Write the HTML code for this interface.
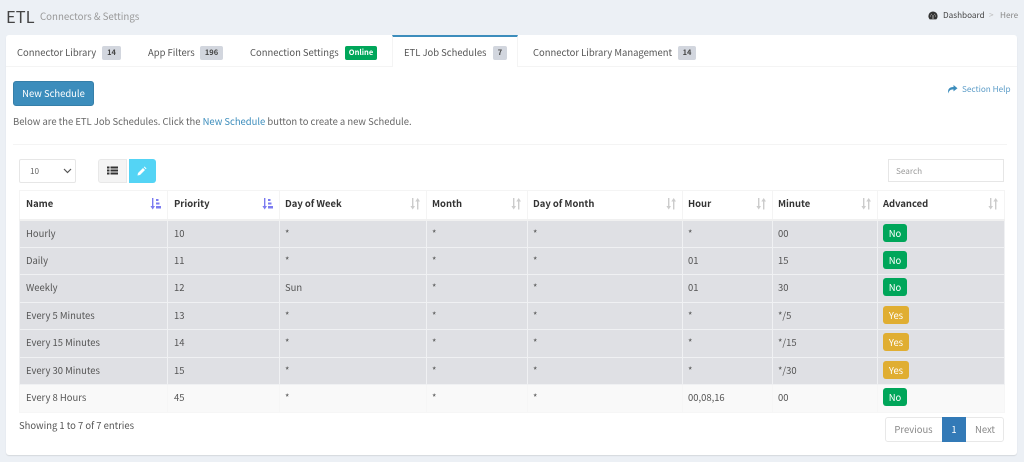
<!DOCTYPE html>
<html><head><meta charset="utf-8"><style>
*{box-sizing:border-box}
html,body{margin:0;padding:0}
body{width:1024px;height:462px;overflow:hidden;background:#ecf0f5;position:relative;font-family:"Noto Sans CJK JP","Liberation Sans",sans-serif;font-size:9.45px;color:#555}
.a{position:absolute;white-space:nowrap;line-height:14px}
.box{position:absolute;left:6px;top:35px;width:1011px;height:420px;background:#fff;border-radius:3px;box-shadow:0 1px 1px rgba(0,0,0,.1)}
.tabline{position:absolute;left:6px;top:66px;width:1011px;height:1px;background:#f4f4f4}
.active{position:absolute;left:392px;top:35px;width:126px;height:32px;background:#fff;border-top:2px solid #3c8dbc;border-right:1px solid #f4f4f4;border-left:1px solid #f4f4f4}
.bdg{position:absolute;height:14px;line-height:14px;background:#d2d6de;color:#444;font-size:7.5px;font-weight:700;text-align:center;border-radius:2px}
table{position:absolute;left:19px;top:190px;width:985px;border-collapse:collapse;table-layout:fixed}
th{height:29px;padding:0 0 3px 6px;text-align:left;font-size:9.45px;font-weight:700;color:#333;border:1px solid #f4f4f4;border-bottom:2px solid #f0f0f0;position:relative;line-height:14px}
td{height:27.5px;padding:0 0 2px 6px;font-size:9.45px;color:#555;border:1px solid #f0f1f3;line-height:14px;background:#dfe0e4}
th:nth-child(n+3),td:nth-child(n+3){padding-left:5px}
tr.l td{background:#f9f9f9;border-color:#f6f6f6}
th svg{position:absolute;right:6px;top:7px}
.lab{display:inline-block;width:24px;height:18px;line-height:18px;border-radius:3px;color:#fff;text-align:center;font-size:9.45px;vertical-align:middle;background:#00a65a}
.y{background:#e0ae32;width:26px}
</style></head><body>
<div class="a" style="left:6px;top:6px;font-size:16.5px;line-height:20px;color:#444">ETL</div>
<div class="a" style="left:40px;top:9px;font-size:9.7px;color:#999">Connectors &amp; Settings</div>
<svg class="a" style="left:928px;top:11px" width="10" height="9" viewBox="0 0 10 9"><path d="M5 .5A4.6 4.6 0 0 0 .4 5c0 1.300.5 2.500 1.300 3.400h6.600A4.600 4.600 0 0 0 9.600 5 4.600 4.600 0 0 0 5 .5z" fill="#333"/><path d="M5 8V4M2 5h1M7 5h1M3 3l.6.6M7 3l-.6.6" stroke="#ccc" stroke-width=".8"/></svg>
<div class="a" style="left:943px;top:8px;font-size:8.2px;color:#444">Dashboard</div>
<div class="a" style="left:989px;top:8px;font-size:8.2px;color:#bbb">&gt;</div>
<div class="a" style="left:1000px;top:8px;font-size:8.2px;color:#888">Here</div>

<div class="box"></div><div class="tabline"></div><div class="active"></div>
<div class="a" style="left:17px;top:45px">Connector Library</div><div class="bdg" style="left:102px;top:46px;width:19px">14</div>
<div class="a" style="left:148px;top:45px">App Filters</div><div class="bdg" style="left:200px;top:46px;width:23px">196</div>
<div class="a" style="left:250px;top:45px">Connection Settings</div><div class="bdg" style="left:345px;top:46px;width:32px;background:#00a65a;color:#fff">Online</div>
<div class="a" style="left:404px;top:45px">ETL Job Schedules</div><div class="bdg" style="left:493px;top:46px;width:14px">7</div>
<div class="a" style="left:533px;top:45px">Connector Library Management</div><div class="bdg" style="left:678px;top:46px;width:18px">14</div>

<div class="a" style="left:13px;top:81px;width:81px;height:25px;line-height:23px;background:#3c8dbc;border:1px solid #367fa9;border-radius:3px;color:#fff;text-align:center">New Schedule</div>
<svg class="a" style="left:947px;top:85px" width="11" height="9" viewBox="0 0 11 9"><path d="M6.500 0l4 3.200-4 3.200V4.500C3.500 4.500 2 5.300 1.500 8.500.3 5 1.800 2 6.500 2z" fill="#3c8dbc"/></svg>
<div class="a" style="left:962px;top:82px;font-size:8.2px;color:#5a9bc7">Section Help</div>
<div class="a" style="left:13px;top:114px;color:#666">Below are the ETL Job Schedules. Click the <span style="color:#3c8dbc">New Schedule</span> button to create a new Schedule.</div>
<div class="a" style="left:13px;top:144px;width:994px;height:1px;background:#f4f4f4"></div>

<div class="a" style="left:19px;top:159px;width:57px;height:24px;border:1px solid #e6e6e6;border-radius:2px"></div>
<div class="a" style="left:30px;top:164px;font-size:8.2px;color:#666">10</div>
<svg class="a" style="left:63px;top:168px" width="9" height="6" viewBox="0 0 9 6"><path d="M1 1l3.500 3.500L8 1" fill="none" stroke="#555" stroke-width="1.200"/></svg>
<div class="a" style="left:98px;top:159px;width:29px;height:24px;background:#f4f4f4;border:1px solid #e8e8e8;border-radius:3px 0 0 3px"></div>
<svg class="a" style="left:107px;top:166px" width="11" height="9" viewBox="0 0 11 9"><path d="M0 .5h2.500v2H0zM0 3.500h2.500v2H0zM0 6.500h2.500v2H0zM3.500 .5H11v2H3.500zM3.500 3.500H11v2H3.500zM3.500 6.500H11v2H3.500z" fill="#333"/></svg>
<div class="a" style="left:129px;top:159px;width:27px;height:24px;background:#54d4f5;border-radius:0 3px 3px 0"></div>
<svg class="a" style="left:137px;top:166px" width="10" height="10" viewBox="0 0 10 10"><path d="M1 7l5-5 2 2-5 5-2.500.5zM6.800 1.200l.7-.7 2 2-.7.7z" fill="#fff"/></svg>
<div class="a" style="left:888px;top:159px;width:116px;height:23px;border:1px solid #e6e6e6"></div>
<div class="a" style="left:896px;top:164px;font-size:8.2px;color:#999">Search</div>

<table><colgroup><col style="width:148px"><col style="width:112px"><col style="width:147px"><col style="width:101px"><col style="width:155px"><col style="width:90px"><col style="width:105px"><col style="width:127px"></colgroup>
<tr>
<th>Name<svg width="11" height="12" viewBox="0 0 11 12"><path d="M2 0h1.400v8H5L2.700 11.500.4 8H2zM6 1h2.500v2H6zM6 4.500h3.500v2H6zM6 8h5v2.500H6z" fill="#7b7bf0"/></svg></th>
<th>Priority<svg width="11" height="12" viewBox="0 0 11 12"><path d="M2 0h1.400v8H5L2.700 11.500.4 8H2zM6 1h2.500v2H6zM6 4.500h3.500v2H6zM6 8h5v2.500H6z" fill="#7b7bf0"/></svg></th>
<th>Day of Week<svg width="10" height="12" viewBox="0 0 10 12"><path d="M2 0h1.400v8H5L2.700 11.500.4 8H2zM7 11.500V3.500H5.300L7.700 0 10 3.500H8.400v8z" fill="#ccc"/></svg></th>
<th>Month<svg width="10" height="12" viewBox="0 0 10 12"><path d="M2 0h1.400v8H5L2.700 11.500.4 8H2zM7 11.500V3.500H5.300L7.700 0 10 3.500H8.400v8z" fill="#ccc"/></svg></th>
<th>Day of Month<svg width="10" height="12" viewBox="0 0 10 12"><path d="M2 0h1.400v8H5L2.700 11.500.4 8H2zM7 11.500V3.500H5.300L7.700 0 10 3.500H8.400v8z" fill="#ccc"/></svg></th>
<th>Hour<svg width="10" height="12" viewBox="0 0 10 12"><path d="M2 0h1.400v8H5L2.700 11.500.4 8H2zM7 11.500V3.500H5.300L7.700 0 10 3.500H8.400v8z" fill="#ccc"/></svg></th>
<th>Minute<svg width="10" height="12" viewBox="0 0 10 12"><path d="M2 0h1.400v8H5L2.700 11.500.4 8H2zM7 11.500V3.500H5.300L7.700 0 10 3.500H8.400v8z" fill="#ccc"/></svg></th>
<th>Advanced<svg width="10" height="12" viewBox="0 0 10 12"><path d="M2 0h1.400v8H5L2.700 11.500.4 8H2zM7 11.500V3.500H5.300L7.700 0 10 3.500H8.400v8z" fill="#ccc"/></svg></th>
</tr>
<tr><td>Hourly</td><td>10</td><td>*</td><td>*</td><td>*</td><td>*</td><td>00</td><td><span class="lab">No</span></td></tr>
<tr><td>Daily</td><td>11</td><td>*</td><td>*</td><td>*</td><td>01</td><td>15</td><td><span class="lab">No</span></td></tr>
<tr><td>Weekly</td><td>12</td><td>Sun</td><td>*</td><td>*</td><td>01</td><td>30</td><td><span class="lab">No</span></td></tr>
<tr><td>Every 5 Minutes</td><td>13</td><td>*</td><td>*</td><td>*</td><td>*</td><td>*/5</td><td><span class="lab y">Yes</span></td></tr>
<tr><td>Every 15 Minutes</td><td>14</td><td>*</td><td>*</td><td>*</td><td>*</td><td>*/15</td><td><span class="lab y">Yes</span></td></tr>
<tr><td>Every 30 Minutes</td><td>15</td><td>*</td><td>*</td><td>*</td><td>*</td><td>*/30</td><td><span class="lab y">Yes</span></td></tr>
<tr class="l"><td>Every 8 Hours</td><td>45</td><td>*</td><td>*</td><td>*</td><td>00,08,16</td><td>00</td><td><span class="lab">No</span></td></tr>
</table>

<div class="a" style="left:19px;top:418px">Showing 1 to 7 of 7 entries</div>
<div class="a" style="left:885px;top:417px;width:119px;height:25px;border:1px solid #e8e8e8;border-radius:3px"></div>
<div class="a" style="left:885px;top:417px;width:57px;height:25px;line-height:25px;text-align:center;color:#888">Previous</div>
<div class="a" style="left:942px;top:417px;width:24px;height:25px;line-height:25px;text-align:center;color:#fff;background:#337ab7">1</div>
<div class="a" style="left:966px;top:417px;width:38px;height:25px;line-height:25px;text-align:center;color:#888">Next</div>
</body></html>
